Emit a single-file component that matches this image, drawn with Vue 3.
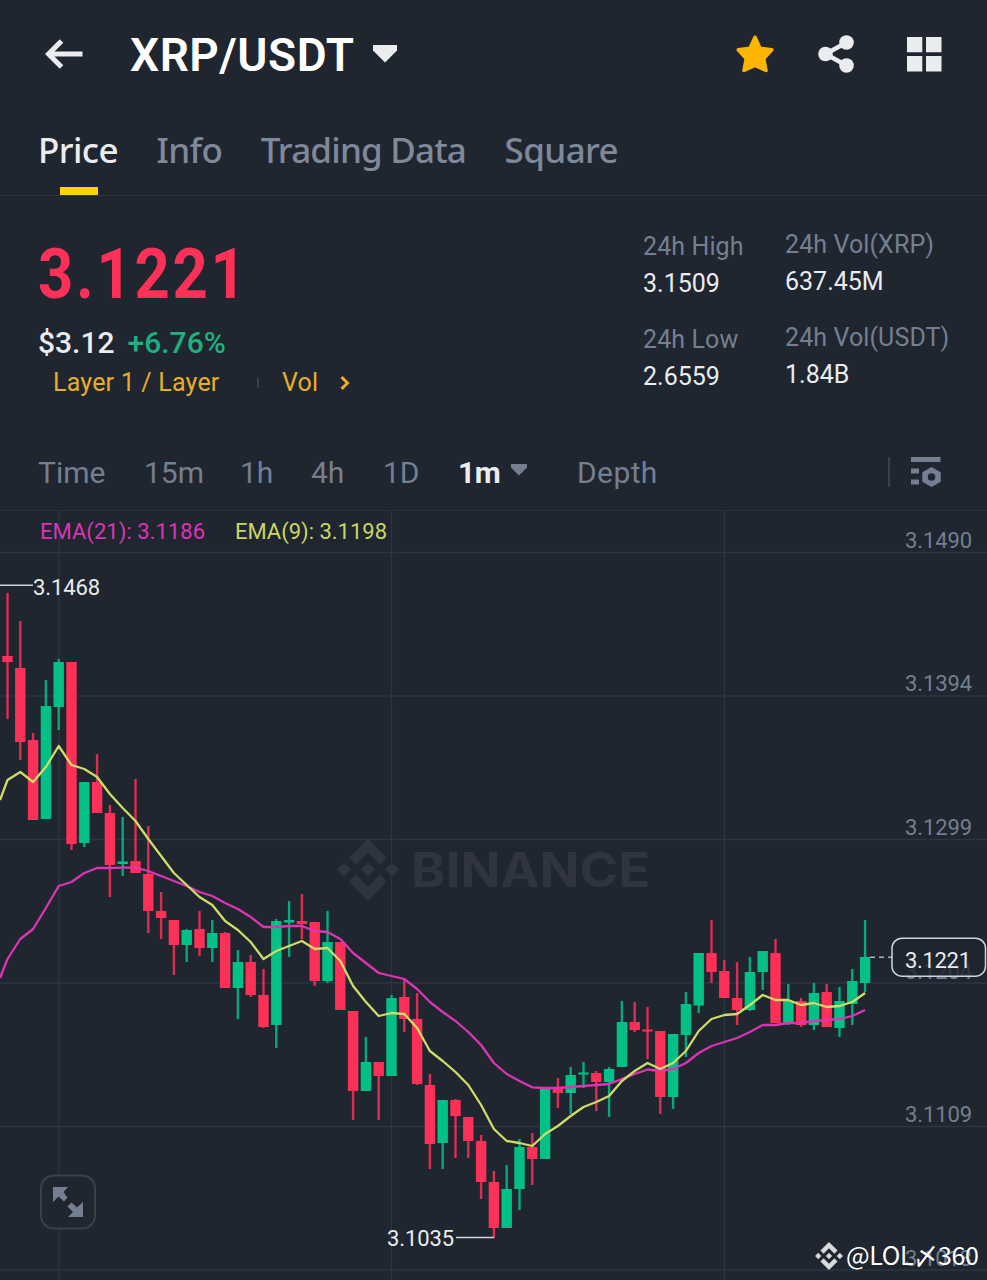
<template>
  <div class="page">
    <header class="top-bar">
      <svg class="back" viewBox="0 0 38 30" width="38" height="30">
        <path d="M37.500 15H3M16.500 2L3.500 15L16.500 28" fill="none" stroke="#eaecef" stroke-width="5" />
      </svg>
      <h1 class="pair">XRP/USDT</h1>
      <svg class="pair-arrow" viewBox="0 0 24 18" width="24" height="18">
        <path d="M0 0H24V5.500L12 17.500L0 5.500Z" fill="#eaecef" />
      </svg>
      <div class="actions">
        <svg viewBox="0 0 38 38" width="38" height="38">
          <path d="M19 2.200L24 13.300L35.800 14.700L27.800 23.500L30 35.500L19 30.300L8 35.500L10.200 23.500L2.200 14.700L14 13.300Z"
            fill="#fcb500" stroke="#fcb500" stroke-width="3.500" stroke-linejoin="round" />
        </svg>
        <svg viewBox="0 0 36 38" width="36" height="38">
          <path d="M28.500 7.500L7.500 19L28.500 30.500" fill="none" stroke="#eaecef" stroke-width="4.500" />
          <circle cx="28.500" cy="7.500" r="7.300" fill="#eaecef" />
          <circle cx="7.500" cy="19" r="7.300" fill="#eaecef" />
          <circle cx="28.500" cy="30.500" r="7.300" fill="#eaecef" />
        </svg>
        <svg viewBox="0 0 35 35" width="35" height="35">
          <path d="M0 0H15.300V15.300H0ZM19 0H34.500V15.300H19ZM0 19H15.300V34.500H0ZM19 19H34.500V34.500H19Z" fill="#eaecef" />
        </svg>
      </div>
    </header>

    <nav class="tabs">
      <a v-for="tab in tabs" :key="tab" :class="['tab', { active: tab === activeTab }]" @click="activeTab = tab">{{ tab }}</a>
    </nav>

    <section class="summary">
      <div class="quote">
        <div class="last-price">3.1221</div>
        <div class="change"><span class="usd">$3.12</span><span class="percent">+6.76%</span></div>
        <div class="tags">
          <span class="tag-layer">Layer 1 / Layer</span>
          <i class="tag-split"></i>
          <span class="tag-vol">Vol</span>
          <svg viewBox="0 0 10 14" width="10" height="14">
            <path d="M1.500 1.200L7.500 7L1.500 12.800" fill="none" stroke="#e8ae28" stroke-width="3" />
          </svg>
        </div>
      </div>
      <div v-for="(column, i) in stats" :key="i" class="stat-column">
        <dl v-for="item in column" :key="item.label" class="stat">
          <dt>{{ item.label }}</dt>
          <dd>{{ item.value }}</dd>
        </dl>
      </div>
    </section>

    <nav class="intervals">
      <span class="time">Time</span>
      <span class="m15">15m</span>
      <span class="h1">1h</span>
      <span class="h4">4h</span>
      <span class="d1">1D</span>
      <span class="m1">1m</span>
      <svg class="m1-arrow" viewBox="0 0 16 12" width="16" height="12">
        <path d="M0 0H16V3.500L8 11.500L0 3.500Z" fill="#747f91" />
      </svg>
      <span class="depth">Depth</span>
      <i class="split"></i>
      <svg viewBox="0 0 30 30" width="30" height="30">
        <path d="M0 0H29.500V5H0ZM0 11.500H8V16.500H0ZM0 22.500H8V27.500H0Z" fill="#747f91" />
        <path d="M20.500 10L29.700 15.200V24.800L20.500 30L11.300 24.800V15.200ZM20.500 16.200A3.800 3.800 0 1 0 20.500 23.800A3.800 3.800 0 1 0 20.500 16.200Z"
          fill="#747f91" fill-rule="evenodd" />
      </svg>
    </nav>

    <svg class="chart" viewBox="0 510 987 770" width="987" height="770">
      <!-- grid -->
      <path class="grid" d="M0 510H987M0 552.500H987M0 696H987M0 839.500H987M0 983H987M0 1126.500H987M0 1270H987M59 510V1280M391.500 510V1280M724.500 510V1280" />

      <!-- watermark -->
      <g class="watermark">
        <g transform="translate(368 869.500)">
          <path :d="logo" />
        </g>
        <text x="411" y="887" textLength="239" lengthAdjust="spacingAndGlyphs">BINANCE</text>
      </g>

      <g v-for="(c, i) in candles" :key="i" :class="c[4] ? 'up' : 'down'">
        <rect :x="cx(i) - 1.2" :y="c[0]" width="2.400" :height="c[3] - c[0]" opacity="0.850" />
        <rect :x="cx(i) - 5.2" :y="c[1]" width="10.400" :height="c[2] - c[1]" />
      </g>

      <polyline class="ema" stroke="#dc35b4" :points="toPoints(978, ema21)" />
      <polyline class="ema" stroke="#cfdc66" :points="toPoints(800, ema9)" />

      <text class="legend" x="40" y="539" fill="#dc35b4" textLength="165">EMA(21): 3.1186</text>
      <text class="legend" x="235" y="539" fill="#c9d765" textLength="152">EMA(9): 3.1198</text>

      <!-- high and low marks -->
      <path d="M0 585.300H33M456 1237.500H494" stroke="#cfd3da" stroke-width="1.500" />
      <text class="mark" x="33" y="594.500" textLength="67">3.1468</text>
      <text class="mark" x="387" y="1246" textLength="67">3.1035</text>

      <text v-for="a in axis" :key="a.value" class="axis" x="905" :y="a.y" textLength="67">{{ a.value }}</text>

      <!-- last price -->
      <path d="M870 957.300H892" stroke="#aab0ba" stroke-width="1.500" stroke-dasharray="5 4" />
      <rect class="last-box" x="892" y="938.200" width="93.500" height="38" rx="10" />
      <text class="mark" x="905" y="968" textLength="66">3.1221</text>

      <!-- full screen button -->
      <g class="expand">
        <rect x="41" y="1175.500" width="54" height="53" rx="13" />
        <path d="M53 1187H68L63.500 1192L67.500 1197.500L64 1201.500L58.500 1196.500L53 1202ZM83 1217H68L73 1212L67.500 1206.500L71.500 1202.500L77 1207.500L83 1202Z" />
      </g>

      <g transform="translate(829 1256) scale(0.450)" fill="#d9d9dc">
        <path :d="logo" />
      </g>
      <text class="author" x="846" y="1265" textLength="133">@LOL〆360</text>
    </svg>
  </div>
</template>

<script setup>
import { ref } from 'vue'

const tabs = ['Price', 'Info', 'Trading Data', 'Square']
const activeTab = ref('Price')

const stats = [
  [
    { label: '24h High', value: '3.1509' },
    { label: '24h Low', value: '2.6559' }
  ],
  [
    { label: '24h Vol(XRP)', value: '637.45M' },
    { label: '24h Vol(USDT)', value: '1.84B' }
  ]
]

const axis = [
  { value: '3.1490', y: 547.5 },
  { value: '3.1394', y: 691 },
  { value: '3.1299', y: 835 },
  { value: '3.1204', y: 978.5 },
  { value: '3.1109', y: 1122 },
  { value: '3.1013', y: 1265.5 }
]

const logo = 'M0 -31L19 -12L12 -5L0 -17L-12 -5L-19 -12ZM0 31L19 12L12 5L0 17L-12 5L-19 12ZM0 -7L7 0L0 7L-7 0ZM-24 -7L-17 0L-24 7L-31 0ZM24 -7L31 0L24 7L17 0Z'

// [high, body top, body bottom, low, up]
const candles = [
  [593, 656, 662, 719, 0], [621, 668, 742, 760, 0], [733, 740, 820, 820, 0], [680, 706, 819, 819, 1],
  [659, 662, 707, 730, 1], [662, 662, 844, 850, 0], [782, 782, 843, 847, 1], [754, 782, 813, 813, 0],
  [805, 813, 865, 897, 0], [817, 861.5, 864, 876, 1], [779, 861, 873, 873, 0], [826, 874, 911, 933, 0],
  [892, 911, 918, 939, 0], [920, 920, 945, 975, 0], [929, 930, 945, 962, 1], [911, 929, 948, 956, 0],
  [920, 933, 948, 962, 1], [932, 933, 988, 988, 0], [950, 962, 988, 1019, 1], [955, 962, 995, 997, 0],
  [969, 995, 1027, 1028, 0], [919, 921, 1025, 1048, 1], [901, 920, 922.5, 957, 1], [894, 921, 924, 939, 0],
  [922, 922, 981, 986, 0], [911, 942, 981, 983, 1], [942, 942, 1010, 1010, 0], [1011, 1011, 1091, 1120, 0],
  [1037, 1062, 1091, 1091, 1], [1062, 1062, 1076, 1120, 0], [995, 998, 1076, 1076, 1], [980, 997, 1019, 1032, 0],
  [993, 1019, 1084, 1085, 0], [1074, 1085, 1144, 1169, 0], [1100, 1100, 1143, 1169, 1], [1099, 1100, 1116, 1158, 0],
  [1117, 1117, 1141, 1158, 0], [1135, 1141, 1182, 1199, 0], [1171, 1182, 1228, 1238, 0], [1165, 1189, 1228, 1228, 1],
  [1139, 1147, 1189, 1210, 1], [1133, 1147, 1159, 1185, 0], [1089, 1089, 1159, 1159, 1], [1078, 1088, 1093, 1108, 0],
  [1067, 1075, 1093, 1114, 1], [1062, 1072.5, 1074.5, 1088, 1], [1071, 1073, 1082, 1111, 0], [1067, 1069, 1082, 1117, 1],
  [1001, 1022, 1067, 1067, 1], [1002, 1022, 1030, 1032, 0], [1007, 1029.5, 1031.5, 1059, 0], [1031, 1031, 1097, 1114, 0],
  [1034, 1034, 1097, 1109, 1], [992, 1004, 1035, 1057, 1], [953, 953, 1005.5, 1013, 1], [920, 953, 972, 983, 0],
  [960, 971, 998, 998, 0], [962, 998, 1010, 1025, 0], [957, 972, 1010, 1011, 1], [951, 951, 972, 990, 1],
  [939, 953, 1023, 1023, 0], [984, 1001, 1024, 1025, 1], [998, 1001, 1025, 1027, 0], [983, 993, 1025, 1030, 1],
  [984, 992, 1027, 1027, 0], [987, 1001, 1028, 1037, 1], [969, 981, 1004, 1025, 1], [920, 957, 983, 992, 1]
]

const ema9 = [
  780, 772, 782, 767, 746, 765, 769, 777, 794, 808, 821, 839, 856, 873, 885, 897, 905, 921, 930, 942, 959, 951, 946,
  941, 949, 948, 961, 986, 1002, 1016, 1013, 1014, 1028, 1051, 1061, 1072, 1085, 1105, 1129, 1141, 1143, 1146, 1134,
  1126, 1116, 1107, 1102, 1096, 1081, 1071, 1063, 1069, 1063, 1051, 1031, 1019, 1015, 1014, 1005, 995, 1000, 1000,
  1005, 1003, 1007, 1006, 1002, 993
]
const ema21 = [
  959, 939, 929, 908, 886, 882, 873, 868, 868, 867.7, 867.7, 871, 876, 881, 886, 892, 896, 903, 909, 917, 927, 927,
  926, 926, 931, 932, 939, 953, 963, 973, 976, 979, 989, 1002, 1012, 1021, 1032, 1045, 1063, 1074, 1081, 1087.3, 1088,
  1088, 1087, 1086, 1085, 1084, 1079, 1074, 1069.5, 1071, 1069, 1063, 1053, 1046, 1042, 1038, 1032, 1025, 1025, 1023,
  1023, 1021, 1020, 1019, 1016, 1010
]

const cx = (i) => 7.5 + i * 12.8
// edge is the height at which the line comes in from the left side
const toPoints = (edge, values) => [`0,${edge}`, ...values.map((y, i) => `${cx(i)},${y}`)].join(' ')
</script>

<style>
body {
  background: #1f2630;
}
</style>

<style scoped>
.page {
  width: 987px;
  height: 1280px;
  display: flex;
  flex-direction: column;
  overflow: hidden;
  background: #1f2630;
  color: #eaecef;
  font-family: Roboto, "Noto Sans CJK SC", sans-serif;
}

.top-bar {
  height: 108px;
  flex: none;
  display: flex;
  align-items: center;
  box-sizing: border-box;
  padding: 0 45px 0 45px;
}

.pair {
  margin: 2px 0 0 47px;
  width: 243px;
  font-size: 46px;
  font-weight: 600;
  letter-spacing: 0.5px;
  color: #fff;
}

.actions {
  margin-left: auto;
  display: flex;
  align-items: center;
}

.actions svg:nth-child(2) {
  margin: 0 53px 0 44px;
}

.tabs {
  height: 87px;
  flex: none;
  display: flex;
  gap: 38.5px;
  padding-left: 38px;
  border-bottom: 1px solid #2d3541;
  font-family: "Noto Sans", sans-serif;
  font-size: 35px;
  font-weight: 500;
  letter-spacing: -0.6px;
  color: #7f899a;
}

.tab {
  position: relative;
  line-height: 83px;
  white-space: nowrap;
}

.tab:nth-child(3) {
  letter-spacing: -0.8px;
}

.tab.active {
  color: #eaecef;
}

.tab.active::after {
  content: "";
  position: absolute;
  left: 50%;
  bottom: 0;
  width: 38px;
  height: 8px;
  margin-left: -18px;
  background: #fcd20e;
}

.summary {
  height: 234px;
  flex: none;
  display: flex;
}

.quote {
  width: 643px;
  box-sizing: border-box;
  padding: 38px 0 0 38px;
}

/* narrow, widely set digits */
.last-price {
  width: 240px;
  height: 84px;
  font-size: 70px;
  line-height: 80px;
  font-weight: 700;
  letter-spacing: 3px;
  transform: scaleX(0.88);
  transform-origin: 0 0;
  color: #fd3058;
}

.change {
  display: flex;
  gap: 13px;
  font-size: 30px;
  line-height: 50px;
  font-weight: 500;
}

.percent {
  color: #20b080;
}

.tags {
  display: flex;
  align-items: center;
  padding-left: 15px;
  font-size: 25px;
  letter-spacing: 0.2px;
  line-height: 30px;
  color: #e8ae28;
}

.tag-layer {
  width: 204px;
}

.tag-split {
  width: 2px;
  height: 10px;
  background: #39414d;
}

.tag-vol {
  width: 58px;
  margin-left: 23px;
}

.stat-column {
  width: 142px;
  padding-top: 32px;
}

.stat-column + .stat-column {
  padding-top: 30px;
}

.stat {
  height: 93px;
  margin: 0;
  font-size: 25px;
  line-height: 37px;
  white-space: nowrap;
}

.stat dt {
  letter-spacing: 0.1px;
  color: #747f91;
}

.stat dd {
  margin: 0;
}

.intervals {
  height: 80px;
  flex: none;
  display: flex;
  align-items: center;
  box-sizing: border-box;
  padding: 6px 46px 2px 38px;
  font-size: 30px;
  color: #747f91;
}

.intervals span,
.intervals svg {
  flex: none;
}

.time {
  width: 106px;
}

.m15 {
  width: 96px;
}

.h1 {
  width: 71px;
}

.h4 {
  width: 72px;
}

.d1 {
  width: 75px;
}

.m1 {
  width: 53px;
  font-weight: 700;
  letter-spacing: -0.5px;
  color: #eaecef;
}

.m1-arrow {
  margin: -4px 50px 0 0;
}

.depth {
  letter-spacing: 0.4px;
}

.split {
  width: 2px;
  height: 30px;
  margin: 0 21px 0 auto;
  background: #39414d;
}

.chart {
  display: block;
  flex: none;
}

.grid {
  fill: none;
  stroke: #2d3541;
  stroke-width: 1.3;
}

.watermark {
  fill: #2f3440;
}

.watermark text {
  font-family: Inter, sans-serif;
  font-size: 48px;
  font-weight: 700;
}

.up {
  fill: #03c087;
}

.down {
  fill: #fd3058;
}

.ema {
  fill: none;
  stroke-width: 2.3;
  stroke-linejoin: round;
}

.legend,
.axis,
.mark {
  font-size: 22px;
}

.mark {
  fill: #eaecef;
}

.axis {
  fill: #747f91;
}

.last-box {
  fill: #1f2630;
  fill-opacity: 0.8;
  stroke: #cfd3da;
  stroke-width: 1.5;
}

.expand rect {
  fill: #1f2630;
  stroke: #39414d;
  stroke-width: 2;
}

.expand path {
  fill: #747f91;
}

.author {
  font-family: "Noto Sans CJK SC", sans-serif;
  font-size: 25px;
  fill: #fff;
}
</style>
